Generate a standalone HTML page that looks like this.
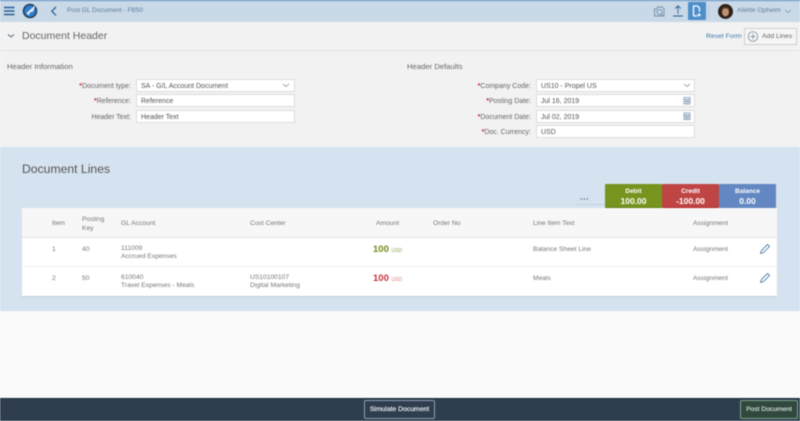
<!DOCTYPE html>
<html><head><meta charset="utf-8"><style>
html,body{margin:0;padding:0;width:800px;height:421px;overflow:hidden;background:#fafafa}
body{font-family:"Liberation Sans",sans-serif;font-size:7px;color:#666;position:relative}
#w{position:absolute;left:0;top:0;width:800px;height:421px;filter:blur(.4px)}
.a,.i,.l,.t{position:absolute;white-space:nowrap}
.i{background:#fff;border:1px solid #dcdcdc;box-sizing:border-box;width:159px;height:13px;line-height:13px;padding-left:4px;font-size:7px;color:#555}
.l{text-align:right;width:130px;font-size:7px;line-height:15px;color:#666}
.l b{color:#c8323c}
.t{line-height:9px;font-size:6.700px;color:#777}
.k{position:absolute;top:184px;width:57px;height:24px;box-sizing:border-box;color:#fff;text-align:center;font-weight:bold;border-radius:1px}
.k div:first-child{font-size:6.500px;line-height:8px;margin-top:3.500px}
.k div:last-child{font-size:8.500px;line-height:11px;margin-top:.5px}
</style></head><body><div id="w">
<div class="a" style="left:0;top:0;width:800px;height:22px;background:#c9d9e8"></div>
<div class="a" style="left:0;top:0;width:800px;height:1px;background:#4f86bd"></div>
<svg class="a" style="left:0;top:0" width="800" height="22">
<path d="M4 7.500h10.500M4 11h10.500M4 14.500h10.500" stroke="#2a5f94" stroke-width="1.500"/>
<circle cx="30" cy="11" r="6.500" fill="#2b7fd0" stroke="#243a50" stroke-width="1.500"/>
<path d="M26.500 13l9-8-2.500 6.500-3 1-1.500 3z" fill="#e8eef4"/>
<path d="M56 7l-4.200 4.200 4.200 4.200" fill="none" stroke="#2a5f94" stroke-width="1.300"/>
<g fill="none" stroke="#7590a8" stroke-width="1">
<path d="M654.500 9h2l1-2h4.500l2 2v7h-9.500z"/><circle cx="659.500" cy="12" r="2.500"/><path d="M661 14l2.500 2.500"/>
</g>
<path d="M678 14V6M675.300 8.500l2.700-2.700 2.700 2.700M673 16h10" fill="none" stroke="#2a6294" stroke-width=".9"/>
<rect x="688" y="2" width="18" height="18" rx="1" fill="#4d8fca"/>
<path d="M693.500 16v-10h4l2 2v3.500M693.500 16h3.500" fill="none" stroke="#fff" stroke-width="1.300"/>
<path d="M699 13v3.800M697.100 15h3.800" stroke="#fff" stroke-width="1.100"/>
<path d="M708.500 4v14" stroke="#bccbda" stroke-width=".8"/>
<circle cx="725.500" cy="11.500" r="7.500" fill="#2e2019"/>
<ellipse cx="725.500" cy="12" rx="3.500" ry="4.500" fill="#bd9070"/>
<path d="M722 9.500c1-2.500 6-2.500 7 0" stroke="#5a3a25" stroke-width="1.500" fill="none"/>
<path d="M785 10l3 2.500 3-2.500" fill="none" stroke="#7f97ad" stroke-width=".7"/>
</svg>
<div class="a" style="left:67px;top:5px;font-size:6.500px;line-height:12px;color:#5f7d99">Post GL Document - FB50</div>
<div class="a" style="left:737px;top:5px;font-size:6.700px;line-height:12px;color:#64809a">Aliette Opheim</div>

<div class="a" style="left:0;top:22px;width:800px;height:125px;background:#f2f2f2"></div>
<div class="a" style="left:0;top:50px;width:800px;height:1px;background:#e2e2e2"></div>
<svg class="a" style="left:0;top:22px" width="30" height="28"><path d="M8 12.500l3 2.500 3-2.500" fill="none" stroke="#566b7e" stroke-width="1"/></svg>
<div class="a" style="left:22px;top:29px;font-size:10.500px;line-height:14px;color:#666">Document Header</div>
<div class="a" style="left:706px;top:32px;font-size:6.800px;line-height:10px;color:#3f78ad">Reset Form</div>
<div class="a" style="left:744px;top:28px;width:53px;height:17px;box-sizing:border-box;border:1px solid #d0d0d0;background:#f5f5f5"></div>
<svg class="a" style="left:744px;top:28px" width="22" height="17"><circle cx="9" cy="8.500" r="4.800" fill="none" stroke="#6c7f90" stroke-width=".7"/><path d="M9 5.700v5.600M6.200 8.500h5.600" stroke="#6c7f90" stroke-width=".7"/></svg>
<div class="a" style="left:762px;top:32px;font-size:6.800px;line-height:10px;color:#666">Add Lines</div>

<div class="a" style="left:7px;top:61px;font-size:7.700px;line-height:12px;color:#666">Header Information</div>
<div class="a" style="left:407px;top:61px;font-size:7.700px;line-height:12px;color:#666">Header Defaults</div>

<div class="l" style="left:1px;top:79px"><b>*</b>Document type:</div>
<div class="l" style="left:1px;top:94px"><b>*</b>Reference:</div>
<div class="l" style="left:1px;top:110px">Header Text:</div>
<div class="i" style="left:136px;top:79px">SA - G/L Account Document</div>
<div class="i" style="left:136px;top:94px">Reference</div>
<div class="i" style="left:136px;top:110px">Header Text</div>

<div class="l" style="left:401px;top:79px"><b>*</b>Company Code:</div>
<div class="l" style="left:401px;top:94px"><b>*</b>Posting Date:</div>
<div class="l" style="left:401px;top:110px"><b>*</b>Document Date:</div>
<div class="l" style="left:401px;top:125px"><b>*</b>Doc. Currency:</div>
<div class="i" style="left:536px;top:79px">US10 - Propel US</div>
<div class="i" style="left:536px;top:94px">Jul 16, 2019</div>
<div class="i" style="left:536px;top:110px">Jul 02, 2019</div>
<div class="i" style="left:536px;top:125px">USD</div>
<svg class="a" style="left:0;top:0" width="800" height="150">
<g fill="none" stroke="#6d8aa6" stroke-width=".7">
<path d="M283 84l3 2.500 3-2.500M684 84l3 2.500 3-2.500"/>
<rect x="684" y="97.500" width="6" height="6.500"/><path d="M684 99.500h6M686 99.500v4.500M688 99.500v4.500M684 101.700h6"/>
<rect x="684" y="113" width="6" height="6.500"/><path d="M684 115h6M686 115v4.500M688 115v4.500M684 117.200h6"/>
</g></svg>

<div class="a" style="left:0;top:147px;width:800px;height:164px;background:#d5e2ef"></div>
<div class="a" style="left:22px;top:161px;font-size:12.200px;line-height:16px;color:#555">Document Lines</div>
<svg class="a" style="left:575px;top:194px" width="30" height="10"><path d="M5.500 5h8" stroke="#6f8aa3" stroke-width="1.500" stroke-dasharray="1.500 1.500"/></svg>
<div class="a" style="left:575px;top:204px;width:30px;height:1px;background:#c4d3e2"></div>
<div class="k" style="left:605px;background:#76941e;border-bottom:1px solid #5f8010"><div>Debit</div><div>100.00</div></div>
<div class="k" style="left:662px;background:#bf4444;border-bottom:1px solid #b02a2a"><div>Credit</div><div>-100.00</div></div>
<div class="k" style="left:719px;background:#6287c2;width:57px"><div>Balance</div><div>0.00</div></div>

<div class="a" style="left:22px;top:208px;width:755px;height:29px;background:#f7f7f7;border-bottom:1px solid #e3e3e3"></div>
<div class="a" style="left:22px;top:238px;width:755px;height:58px;background:#fff;box-shadow:0 1px 1px #bccbda"></div>
<div class="a" style="left:22px;top:266px;width:755px;height:1px;background:#efefef"></div>

<div class="t" style="left:52px;top:219px">Item</div>
<div class="t" style="left:82px;top:215px">Posting<br>Key</div>
<div class="t" style="left:121px;top:219px">GL Account</div>
<div class="t" style="left:250px;top:219px">Cost Center</div>
<div class="t" style="left:376px;top:219px">Amount</div>
<div class="t" style="left:433px;top:219px">Order No</div>
<div class="t" style="left:533px;top:219px">Line Item Text</div>
<div class="t" style="left:693px;top:219px">Assignment</div>

<div class="t" style="left:52px;top:245px">1</div>
<div class="t" style="left:82px;top:245px">40</div>
<div class="t" style="left:121px;top:245px;line-height:8px">111009<br>Accrued Expenses</div>
<div class="a" style="left:373px;top:244px;font-size:9.500px;line-height:12px;font-weight:bold;color:#6c8c16">100 <span style="font-size:5px;font-weight:normal;color:#8aa04a">USD</span></div>
<div class="t" style="left:533px;top:245px">Balance Sheet Line</div>
<div class="t" style="left:693px;top:245px">Assignment</div>

<div class="t" style="left:52px;top:274px">2</div>
<div class="t" style="left:82px;top:274px">50</div>
<div class="t" style="left:121px;top:274px;line-height:8px">610040<br>Travel Expenses - Meals</div>
<div class="t" style="left:250px;top:274px;line-height:8px">US10100107<br>Digital Marketing</div>
<div class="a" style="left:373px;top:273px;font-size:9.500px;line-height:12px;font-weight:bold;color:#c6343c">100 <span style="font-size:5px;font-weight:normal;color:#d07a7e">USD</span></div>
<div class="t" style="left:533px;top:274px">Meals</div>
<div class="t" style="left:693px;top:274px">Assignment</div>

<svg class="a" style="left:755px;top:240px" width="20" height="50"><g fill="none" stroke="#3f6f9f" stroke-width=".8">
<path d="M5.500 13.500l1-3 6-6 2 2-6 6zM5.500 13.500l1.800-.6"/>
<path d="M5.500 42.500l1-3 6-6 2 2-6 6zM5.500 42.500l1.800-.6"/></g></svg>

<div class="a" style="left:0;top:398px;width:800px;height:23px;background:#2f3e4e;border-top:1px solid #1c2a38;box-sizing:border-box"></div>
<div class="a" style="left:364px;top:400px;width:71px;height:19px;box-sizing:border-box;border:1px solid #8ba0b4;border-radius:2px;text-align:center;font-size:6.800px;line-height:18px;color:#eef2f5;-webkit-text-stroke:.15px #eef2f5">Simulate Document</div>
<div class="a" style="left:740px;top:400px;width:58px;height:19px;box-sizing:border-box;border:1px solid #7ba586;border-radius:2px;background:#31483f;text-align:center;font-size:6.700px;line-height:18px;color:#dcebdc;-webkit-text-stroke:.1px #dcebdc">Post Document</div>
</div></body></html>
